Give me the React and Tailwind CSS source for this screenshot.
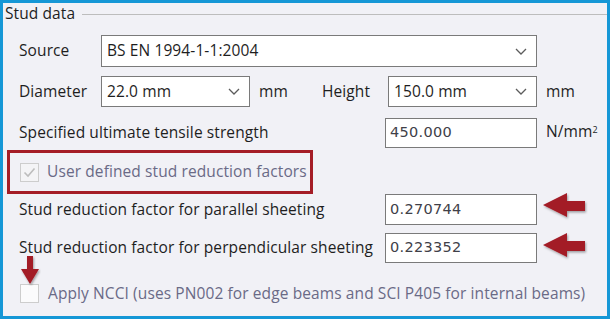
import React from "react";

const Chevron = () => (
  <svg width="12" height="7" viewBox="0 0 12 7" className="shrink-0">
    <path d="M1 1 L6 6 L11 1" fill="none" stroke="#5c5c5c" strokeWidth="1.3" />
  </svg>
);

const ArrowLeft = ({ id }) => (
  <svg width="46" height="28" viewBox="0 0 46 28" className="shrink-0">
    <defs>
      <filter id={id} x="-20%" y="-20%" width="140%" height="150%">
        <feDropShadow dx="1" dy="1.5" stdDeviation="1" floodColor="#000" floodOpacity="0.35" />
      </filter>
    </defs>
    <polygon points="0,12 24,0 24,8 42,8 42,18 24,18 24,24" fill="#a31c26" filter={`url(#${id})`} />
  </svg>
);

const ArrowDown = () => (
  <svg width="20" height="30" viewBox="0 0 20 30">
    <defs>
      <filter id="sd" x="-30%" y="-20%" width="160%" height="150%">
        <feDropShadow dx="1" dy="1.5" stdDeviation="1" floodColor="#000" floodOpacity="0.35" />
      </filter>
    </defs>
    <polygon points="5,0 11,0 11,13 17,13 8,28 -1,13 5,13" fill="#a31c26" filter="url(#sd)" transform="translate(1,0)" />
  </svg>
);

const Select = ({ value, w }) => (
  <div className={`flex items-center justify-between h-full border border-[#7a7a7a] bg-white pl-[5px] pr-[9px] ${w}`}>
    <span className="text-[15.5px] text-[#1e1e1e]">{value}</span>
    <Chevron />
  </div>
);

const NumInput = ({ value }) => (
  <div className="flex items-center h-full w-[152px] border border-[#7a7a7a] bg-white pl-[4px]">
    <span className="text-[14.5px] tracking-[0.3px] text-[#404048] font-['DejaVu_Sans',sans-serif]">{value}</span>
  </div>
);

export default function App() {
  return (
    <div className="relative box-border w-[610px] h-[319px] border-[3px] border-[#1597d6] bg-[#f1f1f6] flex flex-col font-['Open_Sans',sans-serif] text-[#1e1e1e] text-[15.5px] tracking-[0.1px] overflow-hidden">
      <div className="h-[22px] flex items-center pl-[2px]">
        <span className="leading-none">Stud data</span>
        <div className="flex-1 h-px bg-[#bdbdbd] ml-[7px]" />
      </div>

      <div className="mt-[10px] h-[32px] flex items-center pl-[16px]">
        <span className="w-[82px]">Source</span>
        <Select value="BS EN 1994-1-1:2004" w="w-[436px]" />
      </div>

      <div className="mt-[9px] h-[31px] flex items-center pl-[16px]">
        <span className="w-[82px]">Diameter</span>
        <Select value="22.0 mm" w="w-[149px]" />
        <span className="ml-[9px] w-[61px]">mm</span>
        <span className="w-[68px] pl-[2px]">Height</span>
        <Select value="150.0 mm" w="w-[149px]" />
        <span className="ml-[9px]">mm</span>
      </div>

      <div className="mt-[11px] h-[30px] flex items-center pl-[16px]">
        <span className="w-[366px]">Specified ultimate tensile strength</span>
        <NumInput value="450.000" />
        <span className="ml-[9px] self-start mt-[2px]">
          N/mm<sup className="text-[9px]">2</sup>
        </span>
      </div>

      <div className="mt-[2px] ml-[4px] w-[306px] h-[44px] border-[3px] border-[#a51d26] flex items-center pl-[10px] gap-[8px]">
        <div className="w-[19px] h-[19px] border border-[#cdcdcd] bg-[#f4f4f6] flex items-center justify-center">
          <svg width="13" height="11" viewBox="0 0 13 11">
            <path d="M1.5 5.5 L5 9 L11.5 1.5" fill="none" stroke="#bdbdbd" strokeWidth="1.6" />
          </svg>
        </div>
        <span className="text-[#6a6a86]">User defined stud reduction factors</span>
      </div>

      <div className="h-[31px] flex items-center pl-[16px]">
        <span className="w-[366px]">Stud reduction factor for parallel sheeting</span>
        <NumInput value="0.270744" />
        <div className="ml-[6px] self-start -mt-[1px]">
          <ArrowLeft id="a1" />
        </div>
      </div>

      <div className="mt-[8px] h-[30px] flex items-center pl-[16px]">
        <span className="w-[366px]">Stud reduction factor for perpendicular sheeting</span>
        <NumInput value="0.223352" />
        <div className="ml-[6px] self-start">
          <ArrowLeft id="a2" />
        </div>
      </div>

      <div className="mt-[21px] h-[19px] flex items-center pl-[17px] gap-[9px]">
        <div className="w-[19px] h-[19px] border border-[#cdcdcd] bg-[#fbfbfc]" />
        <span className="text-[#6a6a86] whitespace-nowrap">Apply NCCI (uses PN002 for edge beams and SCI P405 for internal beams)</span>
      </div>

      <div className="absolute left-[18px] top-[253px]">
        <ArrowDown />
      </div>
    </div>
  );
}
